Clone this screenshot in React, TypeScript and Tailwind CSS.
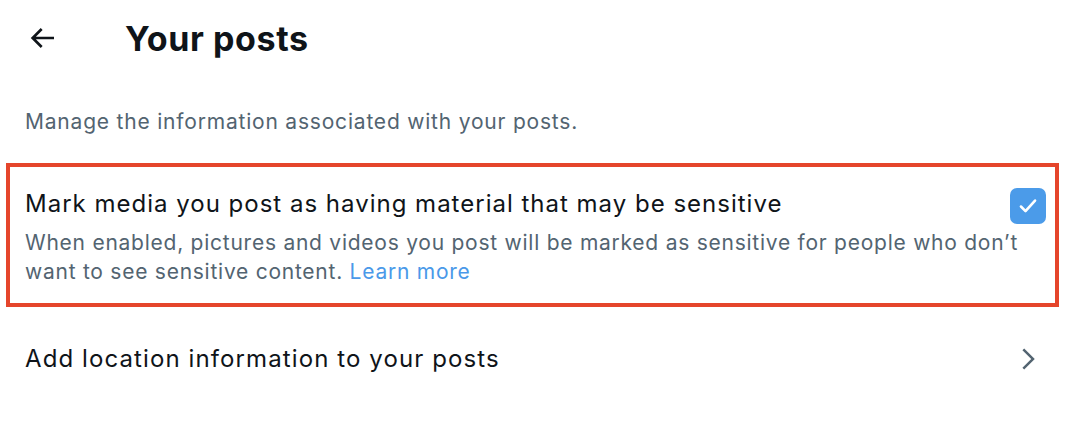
import React from "react";

function BackArrow() {
  return (
    <svg viewBox="0 0 24 24" className="w-[32px] h-[32px]" fill="#0f1419">
      <path d="M7.414 13l5.043 5.04-1.414 1.42L3.586 12l7.457-7.46 1.414 1.42L7.414 11H21v2H7.414z" />
    </svg>
  );
}

function Chevron() {
  return (
    <svg viewBox="0 0 24 24" className="w-[30px] h-[30px]" fill="#536471">
      <path d="M14.586 12L7.543 4.96l1.414-1.42L17.414 12l-8.457 8.46-1.414-1.42L14.586 12z" />
    </svg>
  );
}

export default function App() {
  return (
    <div
      className="w-[1068px] h-[422px] bg-white text-[#0f1419] overflow-hidden"
      style={{ fontFamily: "Inter, 'Noto Sans', sans-serif" }}
    >
      <header className="flex items-center h-[76px] pl-[26px]">
        <BackArrow />
        <h1 className="ml-[67px] text-[34px] font-bold tracking-[0.6px]">Your posts</h1>
      </header>

      <p className="px-[25px] pt-[30px] text-[21px] tracking-[0.8px] text-[#536471]">
        Manage the information associated with your posts.
      </p>

      <section className="mt-[25px] ml-[6px] mr-[9px] border-4 border-[#e5452b] pl-[15px] pr-[9px] pt-[20px] pb-[17px]">
        <div className="flex items-start justify-between">
          <div className="text-[24px] leading-[34px] tracking-[1px]">
            Mark media you post as having material that may be sensitive
          </div>
          <div className="mt-[1px] w-[36px] h-[36px] rounded-[7px] bg-[#4b9be9] flex items-center justify-center">
            <svg viewBox="0 0 24 24" className="w-[26px] h-[26px]" fill="none" stroke="white" strokeWidth="2.4" strokeLinecap="round" strokeLinejoin="round">
              <path d="M5.5 12.5l4.2 4.2L18.5 7" />
            </svg>
          </div>
        </div>
        <p className="mt-[4px] pr-[20px] text-[21px] leading-[29px] tracking-[0.75px] text-[#536471]">
          When enabled, pictures and videos you post will be marked as sensitive for people who don’t want to see sensitive content.{" "}
          <span className="text-[#4a99e9]">Learn more</span>
        </p>
      </section>

      <div className="flex items-center justify-between h-[100px] pt-[4px] pl-[25px] pr-[25px]">
        <span className="text-[24px] tracking-[1.1px]">Add location information to your posts</span>
        <Chevron />
      </div>
    </div>
  );
}
